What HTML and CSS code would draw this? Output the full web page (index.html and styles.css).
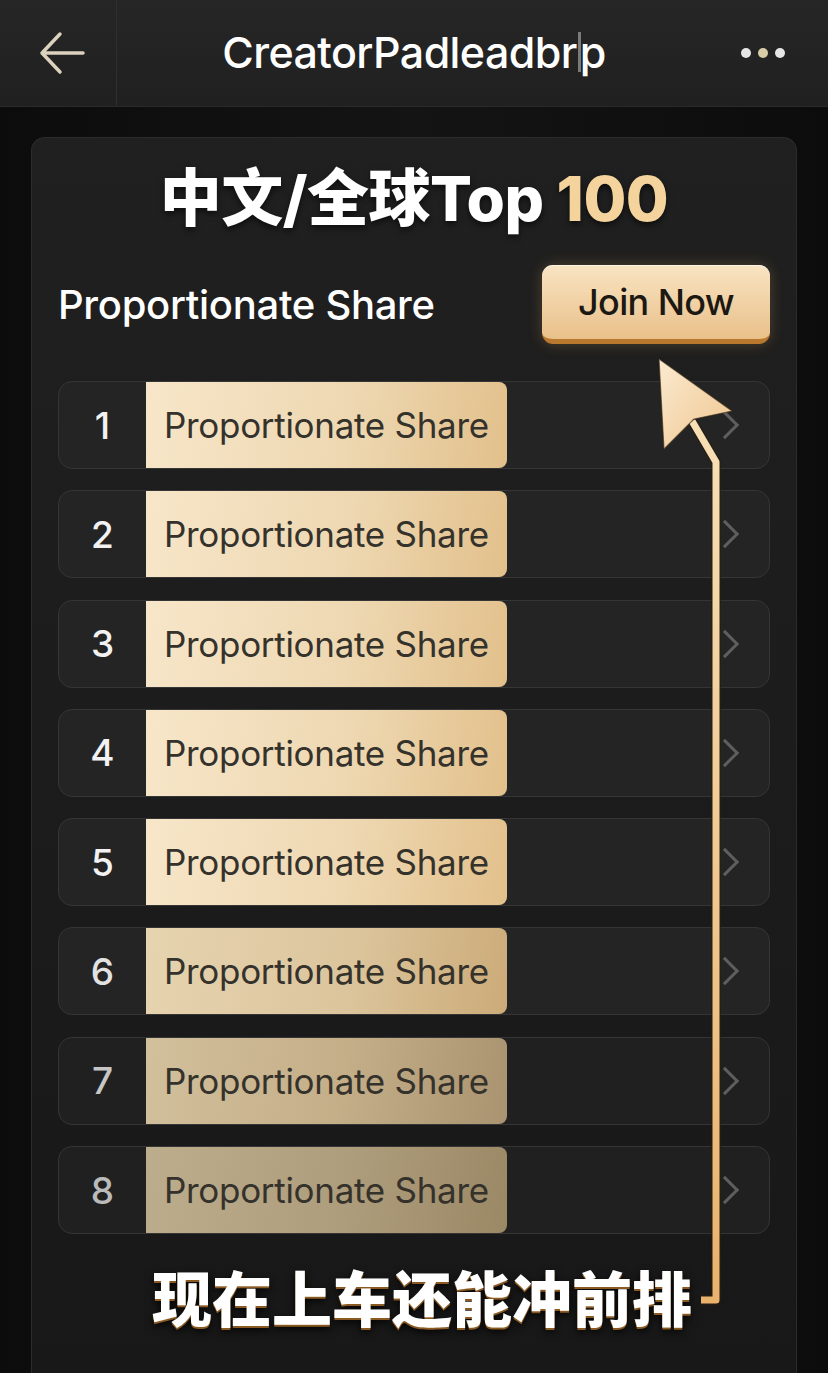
FILE: index.html
```html
<!DOCTYPE html>
<html lang="zh-CN">
<head>
    <meta charset="UTF-8">
    <meta name="viewport" content="width=device-width, initial-scale=1.0">
    <title>CreatorPad Leaderboard</title>
    <link rel="stylesheet" href="styles.css">
</head>
<body>
<div class="page">

    <!-- Верхняя панель -->
    <header class="topbar">
        <div class="back-btn">
            <svg width="48" height="44" viewBox="0 0 48 44">
                <path d="M45 22 H5 M22 3 L4 22 L22 41" fill="none" stroke="#dcd2bd" stroke-width="3.5" stroke-linecap="round" stroke-linejoin="round"/>
            </svg>
        </div>
        <div class="topbar-title">CreatorPadleadbr<span class="caret"></span>p</div>
        <div class="more-btn">
            <span class="dot"></span><span class="dot gold"></span><span class="dot"></span>
        </div>
    </header>

    <!-- Карточка рейтинга -->
    <main class="card">
        <h1 class="headline">中文/全球Top <span class="gold-text">100</span></h1>

        <div class="subhead">
            <span class="subhead-label">Proportionate Share</span>
            <button class="join-btn">Join Now</button>
        </div>

        <ul class="ranks">
            <li class="rank"><span class="rank-num">1</span><span class="rank-label">Proportionate Share</span><span class="chevron"></span></li>
            <li class="rank"><span class="rank-num">2</span><span class="rank-label">Proportionate Share</span><span class="chevron"></span></li>
            <li class="rank"><span class="rank-num">3</span><span class="rank-label">Proportionate Share</span><span class="chevron"></span></li>
            <li class="rank"><span class="rank-num">4</span><span class="rank-label">Proportionate Share</span><span class="chevron"></span></li>
            <li class="rank"><span class="rank-num">5</span><span class="rank-label">Proportionate Share</span><span class="chevron"></span></li>
            <li class="rank rank-6"><span class="rank-num">6</span><span class="rank-label">Proportionate Share</span><span class="chevron"></span></li>
            <li class="rank rank-7"><span class="rank-num">7</span><span class="rank-label">Proportionate Share</span><span class="chevron"></span></li>
            <li class="rank rank-8"><span class="rank-num">8</span><span class="rank-label">Proportionate Share</span><span class="chevron"></span></li>
        </ul>

        <p class="slogan">现在上车还能冲前排</p>
    </main>

    <!-- Стрелка-указатель поверх списка -->
    <svg class="pointer" width="828" height="1373" viewBox="0 0 828 1373">
        <defs>
            <linearGradient id="shaftGrad" gradientUnits="userSpaceOnUse" x1="0" y1="360" x2="0" y2="1310">
                <stop offset="0" stop-color="#f8e2bb"/>
                <stop offset="1" stop-color="#eab26c"/>
            </linearGradient>
            <linearGradient id="headGrad" x1="0" y1="0" x2="1" y2="1">
                <stop offset="0" stop-color="#fbead0"/>
                <stop offset="1" stop-color="#efc58e"/>
            </linearGradient>
        </defs>
        <polyline points="692,421 716,462 716,1300 701,1300" fill="none" stroke="#2a1d0e" stroke-opacity="0.7" stroke-width="10" stroke-linejoin="round"/>
        <polyline points="692,421 716,462 716,1300 701,1300" fill="none" stroke="url(#shaftGrad)" stroke-width="7" stroke-linejoin="round"/>
        <polygon points="659,359 732,411 694,419 664,449" fill="url(#headGrad)" stroke="#3a2812" stroke-opacity="0.6" stroke-width="1.2" stroke-linejoin="round"/>
    </svg>
</div>
</body>
</html>
```

FILE: styles.css
```css
/* Общие стили */
* { box-sizing: border-box; }

body {
    margin: 0;
    background: #101010;
    font-family: Inter, "Noto Sans CJK SC", sans-serif;
    color: #f2f2f2;
}

.page {
    position: relative;
    width: 828px;
    height: 1373px;
    overflow: hidden;
    background: linear-gradient(90deg, #0c0c0c, #141414 50%, #0c0c0c);
}

/* Верхняя панель */
.topbar {
    display: grid;
    grid-template-columns: 117px 1fr 117px;
    height: 107px;
    background: linear-gradient(180deg, #262626, #202020);
    border-bottom: 1px solid #2a2a2a;
}
.back-btn {
    display: flex;
    align-items: center;
    justify-content: center;
    border-right: 1px solid #2f2f2f;
    padding-left: 8px;
}
.topbar-title {
    display: flex;
    align-items: center;
    justify-content: center;
    font-size: 43px;
    font-weight: 500;
    letter-spacing: -0.6px;
    color: #ffffff;
    padding-bottom: 2px;
}
.caret {
    display: inline-block;
    width: 3px;
    height: 40px;
    margin: 0 -1px 0 1px;
    background: #7a7a7a;
    vertical-align: middle;
}
.more-btn {
    display: flex;
    align-items: center;
    justify-content: flex-end;
    gap: 7px;
    padding-right: 43px;
}
.dot {
    width: 10px;
    height: 10px;
    border-radius: 50%;
    background: #e6e6e6;
}
.dot.gold { background: #d9cca8; }

/* Карточка */
.card {
    margin: 30px 31px 0;
    height: 1236px;
    padding: 22px 26px 0;
    border-radius: 14px 14px 0 0;
    border: 1px solid #2c2c2c;
    border-bottom: none;
    background: linear-gradient(180deg, #202020, #1b1b1b 60%, #181818);
}

.headline {
    margin: 0;
    font-size: 62px;
    line-height: 78px;
    font-weight: 800;
    text-align: center;
    letter-spacing: -0.5px;
    color: #ffffff;
    text-shadow: 0 3px 6px rgba(0, 0, 0, 0.6);
}
.gold-text {
    color: #f4d39c;
}

.subhead {
    display: flex;
    align-items: center;
    justify-content: space-between;
    margin-top: 27px;
}
.subhead-label {
    font-size: 40px;
    font-weight: 500;
    letter-spacing: -0.3px;
    color: #ffffff;
}
.join-btn {
    width: 228px;
    height: 79px;
    border: none;
    border-bottom: 5px solid #b8782e;
    border-radius: 11px;
    background: linear-gradient(180deg, #f9e4c2, #e9c08a);
    color: #1c1812;
    font-family: Inter, sans-serif;
    font-size: 36px;
    font-weight: 500;
    letter-spacing: -0.6px;
    box-shadow: 0 0 14px rgba(230, 170, 90, 0.25), inset 0 1px 0 rgba(255, 255, 255, 0.6);
}

/* Список рейтинга */
.ranks {
    list-style: none;
    margin: 37px 0 0;
    padding: 0;
    display: flex;
    flex-direction: column;
    gap: 21.3px;
}
.rank {
    display: flex;
    align-items: stretch;
    height: 88px;
    border-radius: 14px;
    border: 1px solid #353535;
    background: #242424;
    overflow: hidden;
}
.rank-num {
    width: 87px;
    display: flex;
    align-items: center;
    justify-content: center;
    font-size: 37px;
    font-weight: 500;
    color: #f2f2f2;
}
.rank-label {
    width: 361px;
    display: flex;
    align-items: center;
    padding-left: 18px;
    border-radius: 0 8px 8px 0;
    background: linear-gradient(100deg, #f7e6c9, #eed8b2 55%, #e2c08b);
    font-size: 35px;
    letter-spacing: -0.3px;
    color: #35322c;
}
.chevron {
    margin-left: auto;
    margin-right: 34px;
    align-self: center;
    width: 20px;
    height: 20px;
    border-top: 3px solid #5e5e5e;
    border-right: 3px solid #5e5e5e;
    transform: rotate(45deg);
}

/* Постепенное затухание нижних строк */
.rank-6 .rank-label { background: linear-gradient(100deg, #e6d4b0, #dcc59d 55%, #ccab78); }
.rank-6 .rank-num { color: #e2e2e2; }
.rank-7 .rank-label { background: linear-gradient(100deg, #d2c09c, #c4ae88 55%, #a99370); }
.rank-7 .rank-num { color: #c6c6c6; }
.rank-8 .rank-label { background: linear-gradient(100deg, #bcad8c, #ae9d7c 55%, #9b8865); }
.rank-8 .rank-num { color: #bababa; }
.rank-7, .rank-8 { background: #202020; }

/* Слоган внизу */
.slogan {
    margin: 26px 0 0;
    padding-left: 16px;
    text-align: center;
    font-family: "Noto Sans CJK SC", sans-serif;
    font-size: 60px;
    line-height: 72px;
    font-weight: 900;
    color: #ffffff;
    text-shadow: 0 2px 0 #8a5a22, 0 4px 8px rgba(0, 0, 0, 0.9);
}

/* Указатель поверх контента */
.pointer {
    position: absolute;
    top: 0;
    left: 0;
    pointer-events: none;
}
```
